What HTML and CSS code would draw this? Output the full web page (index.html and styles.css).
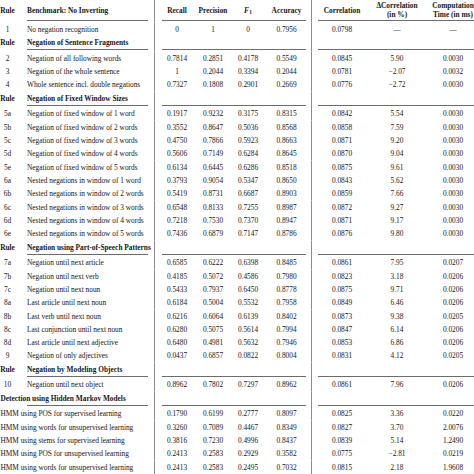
FILE: index.html
```html
<!DOCTYPE html>
<html>
<head>
<meta charset="utf-8">
<link rel="stylesheet" href="styles.css">
</head>
<body>
<div class="table">
  <div class="row hdr">
    <div class="c b">Rule</div><div class="desc b">Benchmark: No Inverting</div><div class="sep"></div>
    <div class="c b">Recall</div><div class="c b">Precision</div><div class="c b"><span><i>F</i><sub>1</sub></span></div><div class="c acc b">Accuracy</div><div class="sep"></div>
    <div class="c b">Correlation</div><div class="c b two">ΔCorrelation<br>(in %)</div><div class="c b two">Computation<br>Time (in ms)</div>
  </div>
  <div class="row line"><div class="seg s1"></div><div class="sep"></div><div class="seg s2"></div><div class="sep"></div><div class="seg s3"></div></div>
  <div class="row"><div class="c">1</div><div class="desc">No negation recognition</div><div class="sep"></div><div class="c">0</div><div class="c">1</div><div class="c">0</div><div class="c acc">0.7956</div><div class="sep"></div><div class="c">0.0798</div><div class="c">—</div><div class="c">—</div></div>

  <div class="row sec"><div class="c b">Rule</div><div class="desc b">Negation of Sentence Fragments</div><div class="sep"></div><div class="sp4"></div><div class="sep"></div></div>
  <div class="row line"><div class="seg s1"></div><div class="sep"></div><div class="seg s2"></div><div class="sep"></div><div class="seg s3"></div></div>
  <div class="row"><div class="c">2</div><div class="desc">Negation of all following words</div><div class="sep"></div><div class="c">0.7814</div><div class="c">0.2851</div><div class="c">0.4178</div><div class="c acc">0.5549</div><div class="sep"></div><div class="c">0.0845</div><div class="c">5.90</div><div class="c">0.0030</div></div>
  <div class="row"><div class="c">3</div><div class="desc">Negation of the whole sentence</div><div class="sep"></div><div class="c">1</div><div class="c">0.2044</div><div class="c">0.3394</div><div class="c acc">0.2044</div><div class="sep"></div><div class="c">0.0781</div><div class="c">−2.07</div><div class="c">0.0032</div></div>
  <div class="row"><div class="c">4</div><div class="desc">Whole sentence incl. double negations</div><div class="sep"></div><div class="c">0.7327</div><div class="c">0.1808</div><div class="c">0.2901</div><div class="c acc">0.2669</div><div class="sep"></div><div class="c">0.0776</div><div class="c">−2.72</div><div class="c">0.0030</div></div>

  <div class="row sec"><div class="c b">Rule</div><div class="desc b">Negation of Fixed Window Sizes</div><div class="sep"></div><div class="sp4"></div><div class="sep"></div></div>
  <div class="row line"><div class="seg s1"></div><div class="sep"></div><div class="seg s2"></div><div class="sep"></div><div class="seg s3"></div></div>
  <div class="row"><div class="c">5a</div><div class="desc">Negation of fixed window of 1 word</div><div class="sep"></div><div class="c">0.1917</div><div class="c">0.9232</div><div class="c">0.3175</div><div class="c acc">0.8315</div><div class="sep"></div><div class="c">0.0842</div><div class="c">5.54</div><div class="c">0.0030</div></div>
  <div class="row"><div class="c">5b</div><div class="desc">Negation of fixed window of 2 words</div><div class="sep"></div><div class="c">0.3552</div><div class="c">0.8647</div><div class="c">0.5036</div><div class="c acc">0.8568</div><div class="sep"></div><div class="c">0.0858</div><div class="c">7.59</div><div class="c">0.0030</div></div>
  <div class="row"><div class="c">5c</div><div class="desc">Negation of fixed window of 3 words</div><div class="sep"></div><div class="c">0.4750</div><div class="c">0.7866</div><div class="c">0.5923</div><div class="c acc">0.8663</div><div class="sep"></div><div class="c">0.0871</div><div class="c">9.20</div><div class="c">0.0030</div></div>
  <div class="row"><div class="c">5d</div><div class="desc">Negation of fixed window of 4 words</div><div class="sep"></div><div class="c">0.5606</div><div class="c">0.7149</div><div class="c">0.6284</div><div class="c acc">0.8645</div><div class="sep"></div><div class="c">0.0870</div><div class="c">9.04</div><div class="c">0.0030</div></div>
  <div class="row"><div class="c">5e</div><div class="desc">Negation of fixed window of 5 words</div><div class="sep"></div><div class="c">0.6134</div><div class="c">0.6445</div><div class="c">0.6286</div><div class="c acc">0.8518</div><div class="sep"></div><div class="c">0.0875</div><div class="c">9.61</div><div class="c">0.0030</div></div>
  <div class="row"><div class="c">6a</div><div class="desc">Nested negations in window of 1 word</div><div class="sep"></div><div class="c">0.3793</div><div class="c">0.9054</div><div class="c">0.5347</div><div class="c acc">0.8650</div><div class="sep"></div><div class="c">0.0843</div><div class="c">5.62</div><div class="c">0.0030</div></div>
  <div class="row"><div class="c">6b</div><div class="desc">Nested negations in window of 2 words</div><div class="sep"></div><div class="c">0.5419</div><div class="c">0.8731</div><div class="c">0.6687</div><div class="c acc">0.8903</div><div class="sep"></div><div class="c">0.0859</div><div class="c">7.66</div><div class="c">0.0030</div></div>
  <div class="row"><div class="c">6c</div><div class="desc">Nested negations in window of 3 words</div><div class="sep"></div><div class="c">0.6548</div><div class="c">0.8133</div><div class="c">0.7255</div><div class="c acc">0.8987</div><div class="sep"></div><div class="c">0.0872</div><div class="c">9.27</div><div class="c">0.0030</div></div>
  <div class="row"><div class="c">6d</div><div class="desc">Nested negations in window of 4 words</div><div class="sep"></div><div class="c">0.7218</div><div class="c">0.7530</div><div class="c">0.7370</div><div class="c acc">0.8947</div><div class="sep"></div><div class="c">0.0871</div><div class="c">9.17</div><div class="c">0.0030</div></div>
  <div class="row"><div class="c">6e</div><div class="desc">Nested negations in window of 5 words</div><div class="sep"></div><div class="c">0.7436</div><div class="c">0.6879</div><div class="c">0.7147</div><div class="c acc">0.8786</div><div class="sep"></div><div class="c">0.0876</div><div class="c">9.80</div><div class="c">0.0030</div></div>

  <div class="row sec"><div class="c b">Rule</div><div class="desc b">Negation using Part-of-Speech Patterns</div><div class="sep"></div><div class="sp4"></div><div class="sep"></div></div>
  <div class="row line"><div class="seg s1"></div><div class="sep"></div><div class="seg s2"></div><div class="sep"></div><div class="seg s3"></div></div>
  <div class="row"><div class="c">7a</div><div class="desc">Negation until next article</div><div class="sep"></div><div class="c">0.6585</div><div class="c">0.6222</div><div class="c">0.6398</div><div class="c acc">0.8485</div><div class="sep"></div><div class="c">0.0861</div><div class="c">7.95</div><div class="c">0.0207</div></div>
  <div class="row"><div class="c">7b</div><div class="desc">Negation until next verb</div><div class="sep"></div><div class="c">0.4185</div><div class="c">0.5072</div><div class="c">0.4586</div><div class="c acc">0.7980</div><div class="sep"></div><div class="c">0.0823</div><div class="c">3.18</div><div class="c">0.0206</div></div>
  <div class="row"><div class="c">7c</div><div class="desc">Negation until next noun</div><div class="sep"></div><div class="c">0.5433</div><div class="c">0.7937</div><div class="c">0.6450</div><div class="c acc">0.8778</div><div class="sep"></div><div class="c">0.0875</div><div class="c">9.71</div><div class="c">0.0206</div></div>
  <div class="row"><div class="c">8a</div><div class="desc">Last article until next noun</div><div class="sep"></div><div class="c">0.6184</div><div class="c">0.5004</div><div class="c">0.5532</div><div class="c acc">0.7958</div><div class="sep"></div><div class="c">0.0849</div><div class="c">6.46</div><div class="c">0.0206</div></div>
  <div class="row"><div class="c">8b</div><div class="desc">Last verb until next noun</div><div class="sep"></div><div class="c">0.6216</div><div class="c">0.6064</div><div class="c">0.6139</div><div class="c acc">0.8402</div><div class="sep"></div><div class="c">0.0873</div><div class="c">9.38</div><div class="c">0.0205</div></div>
  <div class="row"><div class="c">8c</div><div class="desc">Last conjunction until next noun</div><div class="sep"></div><div class="c">0.6280</div><div class="c">0.5075</div><div class="c">0.5614</div><div class="c acc">0.7994</div><div class="sep"></div><div class="c">0.0847</div><div class="c">6.14</div><div class="c">0.0206</div></div>
  <div class="row"><div class="c">8d</div><div class="desc">Last article until next adjective</div><div class="sep"></div><div class="c">0.6480</div><div class="c">0.4981</div><div class="c">0.5632</div><div class="c acc">0.7946</div><div class="sep"></div><div class="c">0.0853</div><div class="c">6.86</div><div class="c">0.0206</div></div>
  <div class="row"><div class="c">9</div><div class="desc">Negation of only adjectives</div><div class="sep"></div><div class="c">0.0437</div><div class="c">0.6857</div><div class="c">0.0822</div><div class="c acc">0.8004</div><div class="sep"></div><div class="c">0.0831</div><div class="c">4.12</div><div class="c">0.0205</div></div>

  <div class="row sec"><div class="c b">Rule</div><div class="desc b">Negation by Modeling Objects</div><div class="sep"></div><div class="sp4"></div><div class="sep"></div></div>
  <div class="row line"><div class="seg s1"></div><div class="sep"></div><div class="seg s2"></div><div class="sep"></div><div class="seg s3"></div></div>
  <div class="row"><div class="c">10</div><div class="desc">Negation until next object</div><div class="sep"></div><div class="c">0.8962</div><div class="c">0.7802</div><div class="c">0.7297</div><div class="c acc">0.8962</div><div class="sep"></div><div class="c">0.0861</div><div class="c">7.96</div><div class="c">0.0206</div></div>

  <div class="row sec"><div class="wide b">Detection using Hidden Markov Models</div><div class="sep"></div><div class="sp4"></div><div class="sep"></div></div>
  <div class="row line"><div class="seg s1"></div><div class="sep"></div><div class="seg s2"></div><div class="sep"></div><div class="seg s3"></div></div>
  <div class="row"><div class="wide">HMM using POS for supervised learning</div><div class="sep"></div><div class="c">0.1790</div><div class="c">0.6199</div><div class="c">0.2777</div><div class="c acc">0.8097</div><div class="sep"></div><div class="c">0.0825</div><div class="c">3.36</div><div class="c">0.0220</div></div>
  <div class="row"><div class="wide">HMM using words for unsupervised learning</div><div class="sep"></div><div class="c">0.3260</div><div class="c">0.7089</div><div class="c">0.4467</div><div class="c acc">0.8349</div><div class="sep"></div><div class="c">0.0827</div><div class="c">3.70</div><div class="c">2.0076</div></div>
  <div class="row"><div class="wide">HMM using stems for supervised learning</div><div class="sep"></div><div class="c">0.3816</div><div class="c">0.7230</div><div class="c">0.4996</div><div class="c acc">0.8437</div><div class="sep"></div><div class="c">0.0839</div><div class="c">5.14</div><div class="c">1.2490</div></div>
  <div class="row"><div class="wide">HMM using POS for unsupervised learning</div><div class="sep"></div><div class="c">0.2413</div><div class="c">0.2583</div><div class="c">0.2929</div><div class="c acc">0.3582</div><div class="sep"></div><div class="c">0.0775</div><div class="c">−2.81</div><div class="c">0.0219</div></div>
  <div class="row"><div class="wide">HMM using words for unsupervised learning</div><div class="sep"></div><div class="c">0.2413</div><div class="c">0.2583</div><div class="c">0.2495</div><div class="c acc">0.7032</div><div class="sep"></div><div class="c">0.0815</div><div class="c">2.18</div><div class="c">1.9608</div></div>
</div>
</body>
</html>
```
FILE: styles.css
```css
html, body {
  margin: 0;
  padding: 0;
  background: #fff;
  overflow: hidden;
}
body {
  width: 474px;
  height: 474px;
}
.table {
  width: 478px;
  font-family: "Liberation Serif", "Times New Roman", serif;
  font-size: 7.35px;
  color: #161616;
}
.row {
  display: grid;
  grid-template-columns: 15px 12px 121px 14px 30px 42px 28px 44px 12px 48px 62px 50px;
  height: 13.33px;
  line-height: 13.33px;
  align-items: stretch;
}
.hdr {
  height: 20.3px;
}
.hdr > div {
  display: flex;
  align-items: center;
  justify-content: center;
  line-height: 9px;
}
.hdr > .desc {
  justify-content: flex-start;
}
.two {
  flex-direction: column;
  text-align: center;
  white-space: nowrap;
}
.c {
  text-align: center;
  white-space: nowrap;
}
.desc {
  grid-column: 3;
  white-space: nowrap;
}
.wide {
  grid-column: 1 / 4;
  white-space: nowrap;
  padding-left: 0.5px;
}
.acc {
  padding-left: 5px;
}
.b {
  font-weight: bold;
}
sub {
  font-size: 5.4px;
  line-height: 0;
  position: relative;
  top: 1.6px;
  vertical-align: baseline;
  margin-left: 0.3px;
}
.sep {
  background: linear-gradient(#8c8c8c, #8c8c8c) center / 1.4px 100% no-repeat;
}
.sp4 {
  grid-column: 5 / 9;
}
.line {
  height: 2.33px;
}
.seg {
  border-top: 1.2px solid #6c6c6c;
}
.s1 {
  grid-column: 3;
}
.s2 {
  grid-column: 5 / 9;
}
.s3 {
  grid-column: 10 / 13;
}
```
